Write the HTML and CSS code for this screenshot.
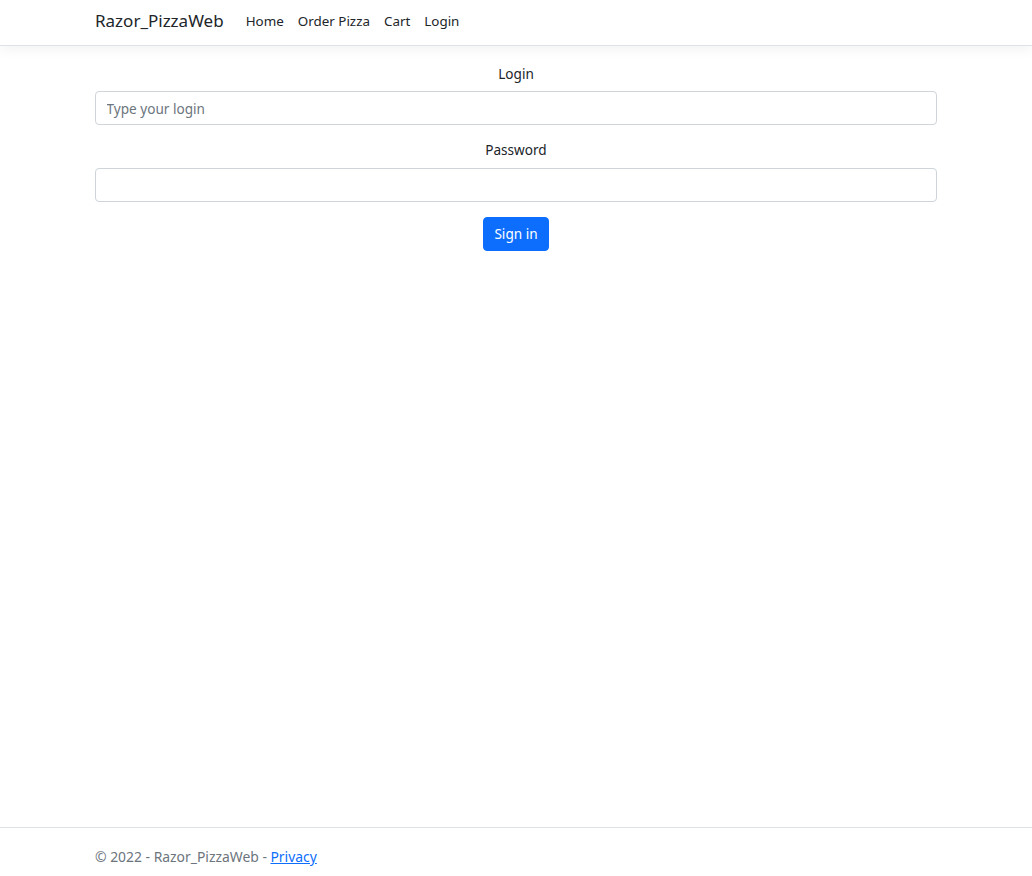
FILE: index.html
```html
<!DOCTYPE html>
<html lang="en">

<head>
    <meta charset="UTF-8">
    <meta name="viewport" content="width=device-width, initial-scale=1.0">
    <title>Login - Razor_PizzaWeb</title>
    <link rel="stylesheet" href="styles.css">
</head>

<body>
    <div class="page">
        <header class="navbar">
            <div class="container nav-inner">
                <a class="brand" href="#">Razor_PizzaWeb</a>
                <ul class="nav-links">
                    <li><a href="#">Home</a></li>
                    <li><a href="#">Order Pizza</a></li>
                    <li><a href="#">Cart</a></li>
                    <li><a href="#">Login</a></li>
                </ul>
            </div>
        </header>

        <main class="container content">
            <!-- login form -->
            <form class="login-form">
                <div class="field">
                    <label for="login">Login</label>
                    <input type="text" id="login" class="form-control" placeholder="Type your login">
                </div>
                <div class="field">
                    <label for="password">Password</label>
                    <input type="password" id="password" class="form-control">
                </div>
                <div class="actions">
                    <button type="button" class="btn-primary">Sign in</button>
                </div>
            </form>
        </main>

        <footer class="footer">
            <div class="container">
                &copy; 2022 - Razor_PizzaWeb - <a href="#">Privacy</a>
            </div>
        </footer>
    </div>
</body>
</html>
```

FILE: styles.css
```css
html {
    font-size: 14px;
}

body {
    margin: 0;
    font-family: "Noto Sans", "Open Sans", sans-serif;
    font-size: 14px;
    line-height: 1.5;
    color: #212529;
    background-color: #fff;
}

.page {
    display: flex;
    flex-direction: column;
    min-height: 100vh;
}

.container {
    width: 842px;
    margin: 0 auto;
}

/* top navbar */
.navbar {
    box-sizing: border-box;
    height: 46px;
    padding-bottom: 3px;
    border-bottom: 1px solid #dee2e6;
    box-shadow: 0 4px 12px rgba(0, 0, 0, 0.05);
    background-color: #fff;
}

.nav-inner {
    display: flex;
    align-items: center;
    height: 100%;
}

.brand {
    font-size: 17px;
    color: #212529;
    text-decoration: none;
    margin-right: 15px;
    white-space: nowrap;
}

.nav-links {
    display: flex;
    list-style: none;
    margin: 0;
    padding: 0;
}

.nav-links a {
    display: block;
    padding: 8px 7px;
    font-size: 13.4px;
    color: #212529;
    text-decoration: none;
}

/* form */
.content {
    flex: 1;
    padding-top: 18px;
}

.field {
    margin-bottom: 15px;
}

.field label {
    display: block;
    text-align: center;
    margin-bottom: 7px;
    font-size: 13.6px;
}

.form-control {
    display: block;
    box-sizing: border-box;
    width: 100%;
    height: 34px;
    padding: 5px 10.5px;
    font-family: inherit;
    font-size: 13.6px;
    color: #212529;
    border: 1px solid #ced4da;
    border-radius: 4px;
    outline: none;
}

.form-control::placeholder {
    color: #6c757d;
}

.actions {
    display: flex;
    justify-content: center;
}

.btn-primary {
    box-sizing: border-box;
    height: 34px;
    width: 66px;
    padding: 0;
    font-family: inherit;
    font-size: 13.6px;
    color: #fff;
    background-color: #0d6efd;
    border: 1px solid #0d6efd;
    border-radius: 4px;
    cursor: pointer;
}

/* footer */
.footer {
    border-top: 1px solid #dee2e6;
    padding: 18px 0 9px;
    line-height: 21px;
    font-size: 13.9px;
    color: #6c757d;
    white-space: nowrap;
}

.footer a {
    color: #0d6efd;
}
```
